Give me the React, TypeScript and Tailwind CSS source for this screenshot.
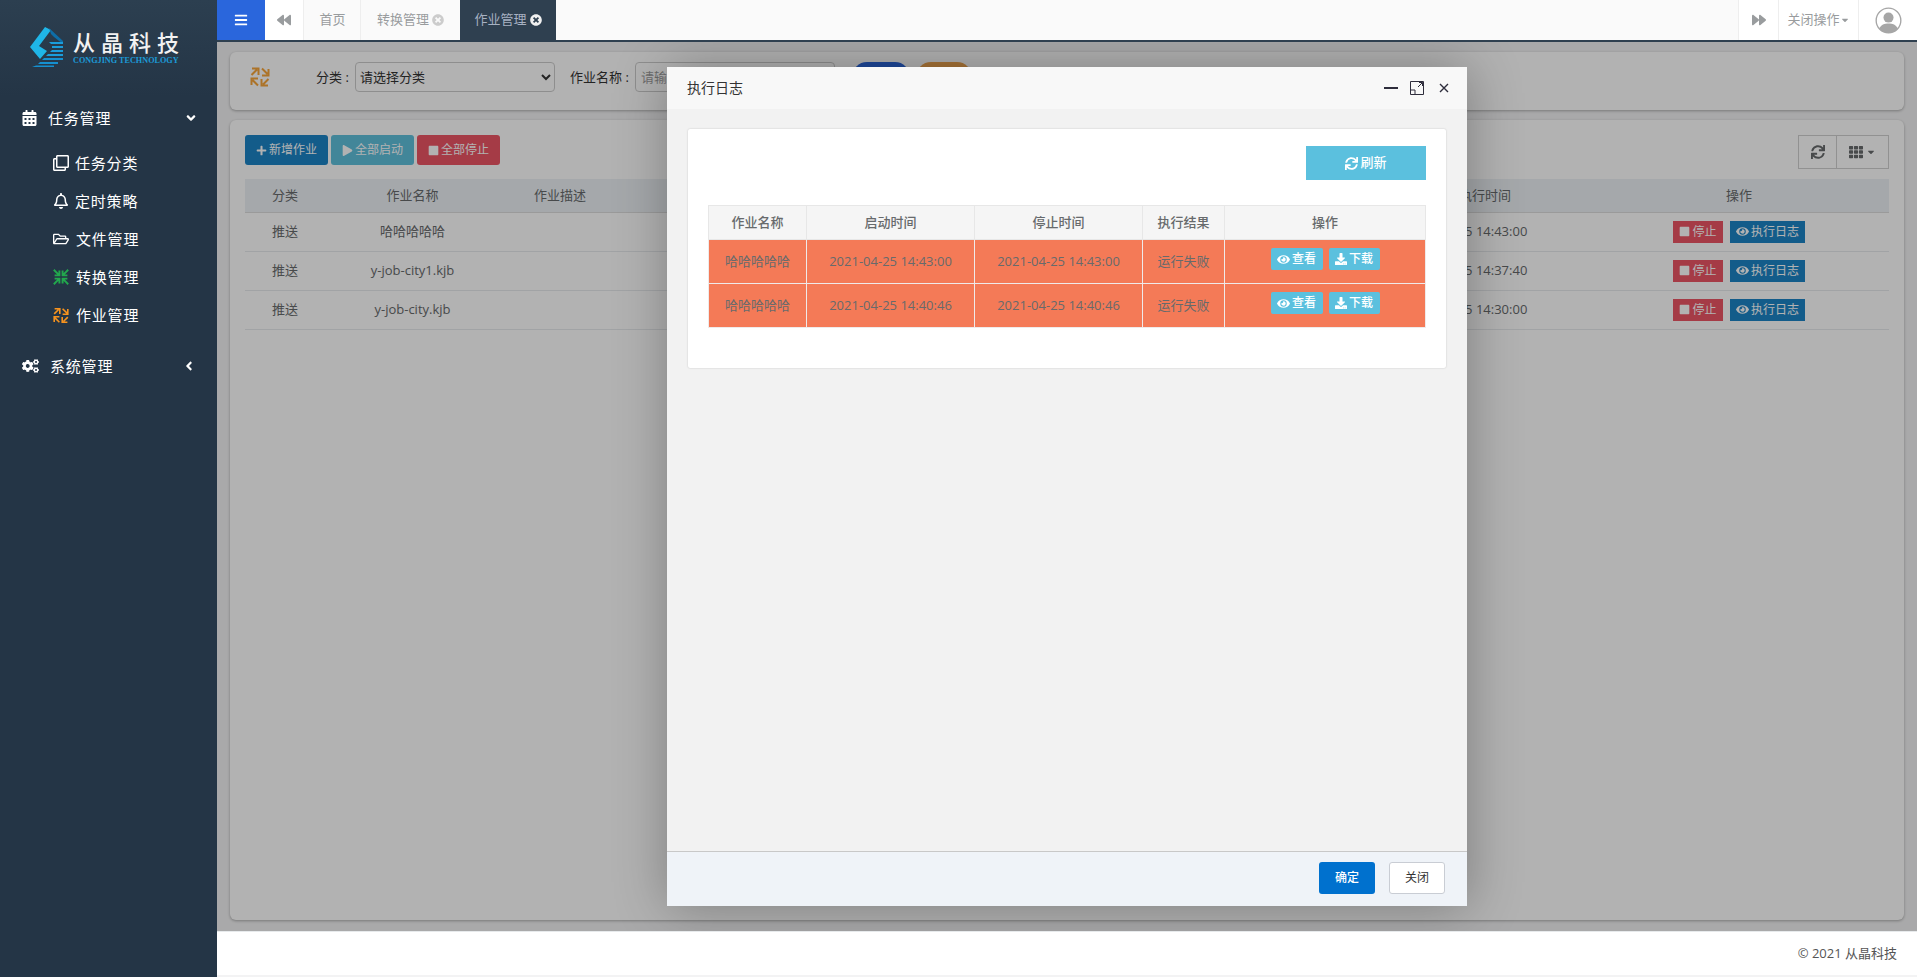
import { FaAngleDown, FaAngleLeft, FaBackward, FaBars, FaCalendarAlt, FaCaretDown, FaCogs, FaDownload, FaEye, FaForward, FaPlay, FaPlus, FaRegBell, FaRegClone, FaRegFolderOpen, FaStop, FaSync, FaTh, FaTimesCircle } from "react-icons/fa"

const jobs = [
  { type: "推送", name: "哈哈哈哈哈", last: "2021-04-25 14:43:00" },
  { type: "推送", name: "y-job-city1.kjb", last: "2021-04-25 14:37:40" },
  { type: "推送", name: "y-job-city.kjb", last: "2021-04-25 14:30:00" },
]

const logs = [
  { name: "哈哈哈哈哈", start: "2021-04-25 14:43:00", stop: "2021-04-25 14:43:00", result: "运行失败" },
  { name: "哈哈哈哈哈", start: "2021-04-25 14:40:46", stop: "2021-04-25 14:40:46", result: "运行失败" },
]

function InwardArrows({ className }: { className?: string }) {
  return (
    <svg viewBox="0 0 20 20" className={className} fill="none" stroke="currentColor" strokeWidth="2.4">
      <path d="M1 1 L7 7 M8 2 V8 H2" />
      <path d="M19 1 L13 7 M12 2 V8 H18" />
      <path d="M1 19 L7 13 M8 18 V12 H2" />
      <path d="M19 19 L13 13 M12 18 V12 H18" />
    </svg>
  )
}

function PinwheelArrows({ className }: { className?: string }) {
  return (
    <svg viewBox="0 0 20 20" className={className} fill="none" stroke="currentColor" strokeWidth="2">
      <path d="M1.500 8 L7 2.500 M2 1.500 H8.500 V8" />
      <path d="M12 1.500 L17.500 7 M18.500 2 V8.500 H12" />
      <path d="M8 18.500 L2.500 13 M1.500 18 V11.500 H8" />
      <path d="M18.500 12 L13 17.500 M18 18.500 H11.500 V12" />
    </svg>
  )
}

function Logo() {
  return (
    <div className="flex items-center h-[40px] pl-[30px]">
      <svg viewBox="0 0 33 40" className="w-[33px] h-[40px] shrink-0">
        <path d="M15 0 L0 20 L10 32 L17 24 L9 19 L18 7 L21 3Z" fill="#1fb6e8" />
        <path d="M19 1 L33 14 L33 17 L24 10 L21 7Z" fill="#0e6ea8" />
        <path d="M19 15 H33 V17 H21Z M22 19 H33 V21 H22Z M22 23 H33 V25 H20Z M18 27 H33 V29 H16Z" fill="#1a9ddc" />
        <path d="M14 31 H33 V33 H12Z M10 35 H28 V37 H8Z M6 38.500 H24 V40 H2Z" fill="#1590d0" />
      </svg>
      <div className="ml-[10px] w-[106px]">
        <div className="text-[22px] leading-[24px] text-[#f2f2f2] tracking-[6px] font-medium whitespace-nowrap">从晶科技</div>
        <div className="mt-[2px] text-[8.2px] leading-[9px] text-[#1c9ad6] font-bold whitespace-nowrap font-['Liberation_Serif',serif]">CONGJING TECHNOLOGY</div>
      </div>
    </div>
  )
}

function SubItem({ icon, label, wide }: { icon: React.ReactNode; label: string; wide?: boolean }) {
  return (
    <div className={`flex items-center h-[38px] pl-[53px] text-white ${wide ? "gap-[7px]" : "gap-[6px]"}`}>
      <span className="w-[16px] flex justify-start">{icon}</span>
      <span className="text-[15px] tracking-[0.8px]">{label}</span>
    </div>
  )
}

function Sidebar() {
  return (
    <aside className="w-[217px] shrink-0 bg-[#243546] text-white">
      <div className="pt-[27px] h-[96px] bg-linear-to-b from-[#2c3f50] to-[#243546]">
        <Logo />
      </div>
      <div className="flex items-center h-[44px] pl-[22px] pr-[19px]">
        <FaCalendarAlt className="w-[15px] h-[16px]" />
        <span className="ml-[11px] text-[15px] tracking-[0.8px]">任务管理</span>
        <FaAngleDown className="ml-auto w-[14px] h-[14px]" />
      </div>
      <div className="pt-[4px]">
        <SubItem icon={<FaRegClone className="w-[16px] h-[16px]" />} label="任务分类" />
        <SubItem icon={<FaRegBell className="w-[16px] h-[16px]" />} label="定时策略" />
        <SubItem wide icon={<FaRegFolderOpen className="w-[17px] h-[16px]" />} label="文件管理" />
        <SubItem wide icon={<InwardArrows className="w-[16px] h-[16px] text-[#22a84d]" />} label="转换管理" />
        <SubItem wide icon={<PinwheelArrows className="w-[17px] h-[17px] text-[#f7931e]" />} label="作业管理" />
      </div>
      <div className="flex items-center h-[44px] mt-[10px] pl-[22px] pr-[21px]">
        <FaCogs className="w-[17px] h-[16px]" />
        <span className="ml-[11px] text-[15px] tracking-[0.8px]">系统管理</span>
        <FaAngleLeft className="ml-auto w-[14px] h-[14px]" />
      </div>
    </aside>
  )
}

function TopBar() {
  return (
    <header className="h-[42px] shrink-0 flex bg-[#fafafa] border-b-2 border-[#2f4050] text-[13px] text-[#999c9e]">
      <div className="w-[48px] bg-[#2a66dc] flex items-center justify-center text-white">
        <FaBars className="w-[14px] h-[14px]" />
      </div>
      <div className="w-[39px] bg-white border-r border-[#eeeeee] flex items-center justify-center">
        <FaBackward className="w-[14px] h-[14px]" />
      </div>
      <div className="w-[57px] border-r border-[#eeeeee] flex items-center justify-center pl-[1px]">首页</div>
      <div className="w-[99px] flex items-center justify-center gap-[3px]">
        转换管理
        <FaTimesCircle className="w-[12px] h-[12px] text-[#cccccc]" />
      </div>
      <div className="w-[96px] bg-[#2f4050] text-[#a7b1c2] flex items-center justify-center gap-[3px]">
        作业管理
        <FaTimesCircle className="w-[12px] h-[12px] text-[#f0f0f0]" />
      </div>
      <div className="ml-auto w-[40px] bg-white border-l border-[#eeeeee] flex items-center justify-center">
        <FaForward className="w-[14px] h-[14px]" />
      </div>
      <div className="w-[80px] bg-white border-l border-[#eeeeee] flex items-center justify-center">
        关闭操作
        <FaCaretDown className="w-[10px] h-[10px]" />
      </div>
      <div className="w-[59px] bg-white border-l border-[#eeeeee] flex items-center justify-center">
        <svg viewBox="0 0 28 28" className="w-[27px] h-[27px] text-[#a6a6a6]" fill="currentColor">
          <circle cx="14" cy="14" r="12.8" fill="none" stroke="currentColor" strokeWidth="1.4" />
          <circle cx="14" cy="11" r="5.2" />
          <path d="M4.500 22.500 C6 18 10 17 14 17 C18 17 22 18 23.500 22.500 C21 25.500 17.500 27 14 27 C10.500 27 7 25.500 4.500 22.500Z" />
        </svg>
      </div>
    </header>
  )
}

function SearchCard() {
  return (
    <div className="h-[58px] bg-white rounded-[6px] shadow-[0_1px_3px_rgba(0,0,0,0.3)] flex items-start pt-[10px] pl-[20px] text-[13px] text-[#333333]">
      <PinwheelArrows className="mt-[5px] w-[20px] h-[20px] text-[#f7a53a]" />
      <span className="ml-[46px] w-[39px] leading-[30px] whitespace-nowrap">分类 :</span>
      <select className="w-[200px] h-[30px] border border-[#cccccc] rounded-[4px] bg-white text-[13px] text-[#333333]">
        <option>请选择分类</option>
      </select>
      <span className="ml-[15px] w-[65px] leading-[30px] whitespace-nowrap">作业名称 :</span>
      <input placeholder="请输入作业名称" className="w-[200px] h-[30px] border border-[#cccccc] rounded-[4px] px-[5px] text-[13px]" />
      <button className="ml-[17px] w-[58px] h-[30px] rounded-[15px] bg-[#2a66dc] text-white">查询</button>
      <button className="ml-[6px] w-[56px] h-[30px] rounded-[15px] bg-[#f0a54f] text-white">重置</button>
    </div>
  )
}

function ToolButton({ bg, icon, label }: { bg: string; icon: React.ReactNode; label: string }) {
  return (
    <button className={`w-[83px] h-[30px] rounded-[3px] ${bg} text-white flex items-center justify-center gap-[2px] text-[12px]`}>
      {icon}
      {label}
    </button>
  )
}

function JobTable() {
  return (
    <table className="w-[1644px] table-fixed text-[13px] text-[#676a6c] text-center">
      <colgroup>
        <col className="w-[80px]" />
        <col className="w-[175px]" />
        <col className="w-[120px]" />
        <col className="w-[723px]" />
        <col className="w-[246px]" />
        <col className="w-[300px]" />
      </colgroup>
      <thead>
        <tr className="h-[33px] bg-[#ecf1f5] border-b border-[#dddddd]">
          <th className="font-normal">分类</th>
          <th className="font-normal">作业名称</th>
          <th className="font-normal">作业描述</th>
          <th className="font-normal"></th>
          <th className="font-normal pl-[38px]">执行时间</th>
          <th className="font-normal">操作</th>
        </tr>
      </thead>
      <tbody>
        {jobs.map((job) => (
          <tr key={job.name} className="h-[39px] border-b border-[#e7eaec]">
            <td>{job.type}</td>
            <td>{job.name}</td>
            <td></td>
            <td></td>
            <td className="whitespace-nowrap">{job.last}</td>
            <td>
              <div className="flex justify-center gap-[7px]">
                <span className="w-[50px] h-[22px] bg-[#ed5565] text-white flex items-center justify-center gap-[2px] text-[12px]">
                  <FaStop className="w-[11px] h-[11px]" />
                  停止
                </span>
                <span className="w-[75px] h-[22px] bg-[#1c84c6] text-white flex items-center justify-center gap-[2px] text-[12px]">
                  <FaEye className="w-[13px] h-[13px]" />
                  执行日志
                </span>
              </div>
            </td>
          </tr>
        ))}
      </tbody>
    </table>
  )
}

function LogModal() {
  return (
    <div className="absolute left-[450px] top-[25px] w-[800px] h-[839px] flex flex-col bg-[#f2f2f2] shadow-[1px_1px_50px_rgba(0,0,0,0.3)]">
      <div className="h-[42px] shrink-0 bg-[#f8f8f8] flex items-center pl-[20px] pr-[18px] text-[14px] text-[#333333]">
        <span className="pb-[2px]">执行日志</span>
        <span className="ml-auto w-[14px] h-[2px] bg-[#2e2d3c]" />
        <svg viewBox="0 0 14 14" className="ml-[12px] w-[14px] h-[14px] text-[#2e2d3c]" fill="none" stroke="currentColor">
          <path d="M.5 .5 H13.5 V13.5 H.5Z M.5 9 H5 V13.5 M8 6 L12.500 1.500 M9 1.500 H12.500 V5" />
        </svg>
        <svg viewBox="0 0 10 10" className="ml-[15px] w-[10px] h-[10px] text-[#2e2d3c]" fill="none" stroke="currentColor" strokeWidth="1.4">
          <path d="M1 1 L9 9 M9 1 L1 9" />
        </svg>
      </div>
      <div className="flex-1 px-[21px] pt-[20px]">
        <div className="h-[239px] bg-white rounded-[2px] shadow-[0_0_2px_rgba(0,0,0,0.2)] pt-[17px] px-[20px]">
          <div className="flex justify-end">
            <button className="w-[120px] h-[34px] bg-[#5bc0de] text-white text-[13px] font-medium flex items-center justify-center gap-[2px]">
              <FaSync className="w-[13px] h-[13px]" />
              刷新
            </button>
          </div>
          <table className="mt-[25px] w-[717px] table-fixed text-[13px] text-center text-[#676a6c] border-collapse">
            <colgroup>
              <col className="w-[98px]" />
              <col className="w-[168px]" />
              <col className="w-[168px]" />
              <col className="w-[82px]" />
              <col className="w-[201px]" />
            </colgroup>
            <thead>
              <tr className="h-[34px] bg-[#f5f5f5]">
                <th className="font-medium border border-[#e7e7e7]">作业名称</th>
                <th className="font-medium border border-[#e7e7e7]">启动时间</th>
                <th className="font-medium border border-[#e7e7e7]">停止时间</th>
                <th className="font-medium border border-[#e7e7e7]">执行结果</th>
                <th className="font-medium border border-[#e7e7e7]">操作</th>
              </tr>
            </thead>
            <tbody>
              {logs.map((log) => (
                <tr key={log.start} className="h-[44px] bg-[#f47a57]">
                  <td className="border border-[#efeaea]">{log.name}</td>
                  <td className="border border-[#efeaea]">{log.start}</td>
                  <td className="border border-[#efeaea]">{log.stop}</td>
                  <td className="border border-[#efeaea]">{log.result}</td>
                  <td className="border border-[#efeaea]">
                    <div className="flex justify-center gap-[6px] pb-[5px] text-[12px] font-medium text-white">
                      <span className="w-[52px] h-[22px] rounded-[2px] bg-[#5bc0de] flex items-center justify-center gap-[2px]">
                        <FaEye className="w-[13px] h-[13px]" />
                        查看
                      </span>
                      <span className="w-[51px] h-[22px] rounded-[2px] bg-[#5bc0de] flex items-center justify-center gap-[2px]">
                        <FaDownload className="w-[12px] h-[12px]" />
                        下载
                      </span>
                    </div>
                  </td>
                </tr>
              ))}
            </tbody>
          </table>
        </div>
      </div>
      <div className="h-[55px] shrink-0 bg-[#eff3f8] border-t border-[#c8c8c8] flex items-center justify-end gap-[14px] pr-[22px] pb-[2px] text-[12px]">
        <button className="w-[56px] h-[32px] rounded-[3px] bg-[#0071ce] text-white font-medium">确定</button>
        <button className="w-[56px] h-[32px] rounded-[3px] bg-white border border-[#c9cdd4] text-[#333333]">关闭</button>
      </div>
    </div>
  )
}

export default function App() {
  return (
    <div className="flex h-screen overflow-hidden bg-white font-['Open_Sans','Noto_Sans_CJK_SC',sans-serif]">
      <Sidebar />
      <div className="flex-1 flex flex-col min-w-0">
        <TopBar />
        <main className="relative flex-1 overflow-hidden bg-[#f3f3f4] px-[13px] pt-[10px]">
          <SearchCard />
          <div className="mt-[10px] h-[800px] bg-white rounded-[6px] shadow-[0_1px_3px_rgba(0,0,0,0.3)] px-[15px] pt-[15px]">
            <div className="flex h-[44px]">
              <div className="flex gap-[3px] h-[30px]">
                <ToolButton bg="bg-[#1c84c6]" icon={<FaPlus className="w-[11px] h-[11px]" />} label="新增作业" />
                <ToolButton bg="bg-[#5fc0dc]" icon={<FaPlay className="w-[11px] h-[11px]" />} label="全部启动" />
                <ToolButton bg="bg-[#ed5565]" icon={<FaStop className="w-[11px] h-[11px]" />} label="全部停止" />
              </div>
              <div className="ml-auto flex h-[34px] border border-[#d0d0d0] text-[#676a6c]">
                <div className="w-[38px] flex items-center justify-center border-r border-[#d0d0d0]">
                  <FaSync className="w-[14px] h-[14px]" />
                </div>
                <div className="w-[51px] flex items-center justify-center gap-[3px]">
                  <FaTh className="w-[14px] h-[14px]" />
                  <FaCaretDown className="w-[10px] h-[10px]" />
                </div>
              </div>
            </div>
            <JobTable />
          </div>
          <div className="absolute inset-0 bg-black/30" />
          <LogModal />
        </main>
        <footer className="h-[46px] shrink-0 bg-white border-b-2 border-[#f3f3f4] border-t border-t-[#e7eaec] flex items-center justify-end pr-[20px] text-[13px] text-[#555555]">
          © 2021 从晶科技
        </footer>
      </div>
    </div>
  )
}
